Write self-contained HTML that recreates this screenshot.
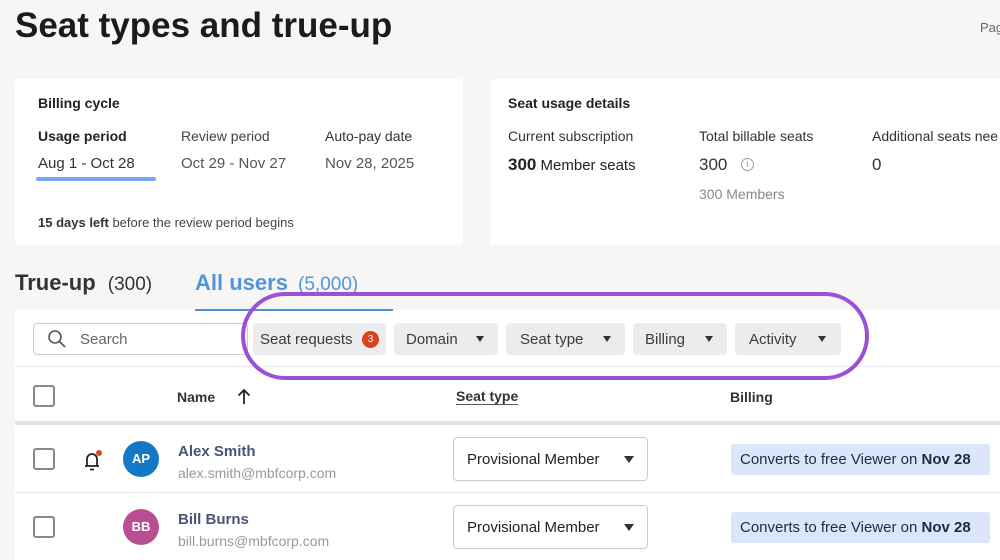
<!DOCTYPE html>
<html><head><style>
*{box-sizing:border-box;margin:0;padding:0}
body{width:1000px;height:556px;overflow:hidden;background:#f7f6f5;font-family:"Liberation Sans",sans-serif;color:#222;position:relative}
.a{position:absolute;white-space:nowrap}
.card{position:absolute;background:#fff;border-radius:3px}
.chip{position:absolute;top:323px;height:32px;background:#ececec;border-radius:4px;font-size:15px;color:#3c3c3c;line-height:33px;padding-left:12px}
.tri{position:absolute;width:0;height:0;border-left:4.5px solid transparent;border-right:4.5px solid transparent;border-top:6px solid #333}
.cb{position:absolute;width:22px;height:22px;border:2px solid #888;border-radius:3px;left:33px}
.sel{position:absolute;left:453px;width:195px;height:44px;border:1.5px solid #ccc;border-radius:4px;font-size:15px;line-height:44px;padding-left:13px;color:#222}
.bill{position:absolute;left:731px;width:259px;height:31px;background:#dbe6fb;border-radius:3px;font-size:15px;line-height:31px;padding-left:9px;color:#1e2a44}
.av{position:absolute;left:123px;width:36px;height:36px;border-radius:50%;color:#fff;font-weight:bold;font-size:13px;text-align:center;line-height:36px}
</style></head><body>
<div class="a" style="left:15px;top:6px;font-size:35px;font-weight:bold;color:#1b1b1b">Seat types and true-up</div>
<div class="a" style="left:980px;top:20px;font-size:13px;color:#666">Pag</div>

<div class="card" style="left:15px;top:79px;width:448px;height:166px"></div>
<div class="a" style="left:38px;top:95px;font-size:14px;font-weight:bold;color:#222">Billing cycle</div>
<div class="a" style="left:38px;top:128px;font-size:14px;font-weight:bold;color:#222">Usage period</div>
<div class="a" style="left:181px;top:128px;font-size:14px;color:#444">Review period</div>
<div class="a" style="left:325px;top:128px;font-size:14px;color:#333">Auto-pay date</div>
<div class="a" style="left:38px;top:155px;font-size:15px;color:#333">Aug 1 - Oct 28</div>
<div class="a" style="left:181px;top:155px;font-size:15px;color:#555">Oct 29 - Nov 27</div>
<div class="a" style="left:325px;top:155px;font-size:15px;color:#555">Nov 28, 2025</div>
<div class="a" style="left:36px;top:177px;width:120px;height:4px;border-radius:2px;background:#7aa6f6"></div>
<div class="a" style="left:38px;top:215px;font-size:13px;color:#444"><b style="color:#333">15 days left</b> before the review period begins</div>

<div class="card" style="left:490px;top:79px;width:520px;height:166px"></div>
<div class="a" style="left:508px;top:95px;font-size:14px;font-weight:bold;color:#222">Seat usage details</div>
<div class="a" style="left:508px;top:128px;font-size:14px;color:#333">Current subscription</div>
<div class="a" style="left:699px;top:128px;font-size:14px;color:#333">Total billable seats</div>
<div class="a" style="left:872px;top:128px;font-size:14px;color:#333">Additional seats nee</div>
<div class="a" style="left:508px;top:155px;font-size:15px;color:#222"><b style="font-size:17px">300</b> Member seats</div>
<div class="a" style="left:699px;top:155px;font-size:17px;color:#333">300</div>
<div class="a" style="left:741px;top:158px;width:13px;height:13px;border:1px solid #999;border-radius:50%;font-size:9px;color:#999;text-align:center;line-height:11px">i</div>
<div class="a" style="left:872px;top:155px;font-size:17px;color:#333">0</div>
<div class="a" style="left:699px;top:186px;font-size:14px;color:#888">300 Members</div>

<div class="a" style="left:15px;top:270px;font-size:22px;font-weight:bold;color:#333">True-up <span style="font-weight:normal;font-size:19px;margin-left:6px">(300)</span></div>
<div class="a" style="left:195px;top:270px;font-size:22px;font-weight:bold;color:#4f96dc">All users <span style="font-weight:normal;font-size:19px;margin-left:4px">(5,000)</span></div>

<div class="card" style="left:15px;top:310px;width:990px;height:250px;border-radius:0"></div>
<div class="a" style="left:195px;top:309px;width:198px;height:2px;background:#4a8ed6"></div>

<div class="a" style="left:33px;top:323px;width:215px;height:32px;border:1.5px solid #ccc;border-radius:4px"></div>
<svg class="a" style="left:47px;top:329px" width="20" height="20" viewBox="0 0 20 20"><circle cx="8" cy="8" r="6" fill="none" stroke="#555" stroke-width="1.6"/><path d="M12.5 12.5L18 18" stroke="#555" stroke-width="1.6"/></svg>
<div class="a" style="left:80px;top:331px;font-size:15px;color:#666">Search</div>

<div class="chip" style="left:253px;width:133px;padding-left:7px">Seat requests<span style="position:absolute;left:109px;top:8px;width:17px;height:17px;border-radius:50%;background:#d8431f;color:#fff;font-size:10px;line-height:17px;text-align:center">3</span></div>
<div class="chip" style="left:394px;width:104px">Domain<span class="tri" style="left:82px;top:13px"></span></div>
<div class="chip" style="left:506px;width:119px;padding-left:14px">Seat type<span class="tri" style="left:97px;top:13px"></span></div>
<div class="chip" style="left:633px;width:94px">Billing<span class="tri" style="left:72px;top:13px"></span></div>
<div class="chip" style="left:735px;width:106px;padding-left:14px">Activity<span class="tri" style="left:83px;top:13px"></span></div>

<div class="a" style="left:15px;top:366px;width:985px;height:1px;background:#e8ebf5"></div>
<div class="cb" style="top:385px"></div>
<div class="a" style="left:177px;top:389px;font-size:14px;font-weight:bold;color:#333">Name</div>
<svg class="a" style="left:237px;top:388px" width="14" height="17" viewBox="0 0 14 17"><path d="M7 16V2M1.5 7.5L7 2l5.5 5.5" fill="none" stroke="#222" stroke-width="1.8"/></svg>
<div class="a" style="left:456px;top:389px;font-size:14px;font-weight:bold;color:#333;border-bottom:1px solid #555;line-height:15px">Seat type</div>
<div class="a" style="left:730px;top:389px;font-size:14px;font-weight:bold;color:#333">Billing</div>
<div class="a" style="left:15px;top:421px;width:985px;height:4px;background:#e2e2e2"></div>

<div class="cb" style="top:448px"></div>
<svg class="a" style="left:81px;top:448px" width="24" height="24" viewBox="0 0 24 24"><path d="M4 18h14M6 18V11a5 5 0 0 1 10 0v7M9 21.5h4" fill="none" stroke="#222" stroke-width="1.8"/><circle cx="18" cy="5" r="3" fill="#e0452a"/></svg>
<div class="av" style="top:441px;background:#1578c4">AP</div>
<div class="a" style="left:178px;top:443px;font-size:15px;font-weight:bold;color:#4a5478">Alex Smith</div>
<div class="a" style="left:178px;top:465px;font-size:14px;color:#999">alex.smith@mbfcorp.com</div>
<div class="sel" style="top:437px">Provisional Member<span class="tri" style="left:170px;top:18px;border-left-width:5px;border-right-width:5px;border-top-width:7px"></span></div>
<div class="bill" style="top:444px">Converts to free Viewer on <b>Nov 28</b></div>

<div class="a" style="left:15px;top:492px;width:985px;height:1px;background:#e6e6e6"></div>

<div class="cb" style="top:516px"></div>
<div class="av" style="top:509px;background:#b94e90">BB</div>
<div class="a" style="left:178px;top:511px;font-size:15px;font-weight:bold;color:#4a5478">Bill Burns</div>
<div class="a" style="left:178px;top:533px;font-size:14px;color:#999">bill.burns@mbfcorp.com</div>
<div class="sel" style="top:505px">Provisional Member<span class="tri" style="left:170px;top:18px;border-left-width:5px;border-right-width:5px;border-top-width:7px"></span></div>
<div class="bill" style="top:512px">Converts to free Viewer on <b>Nov 28</b></div>

<div class="a" style="left:241px;top:292px;width:628px;height:88px;border:4px solid #9b50d8;border-radius:44px"></div>
</body></html>
